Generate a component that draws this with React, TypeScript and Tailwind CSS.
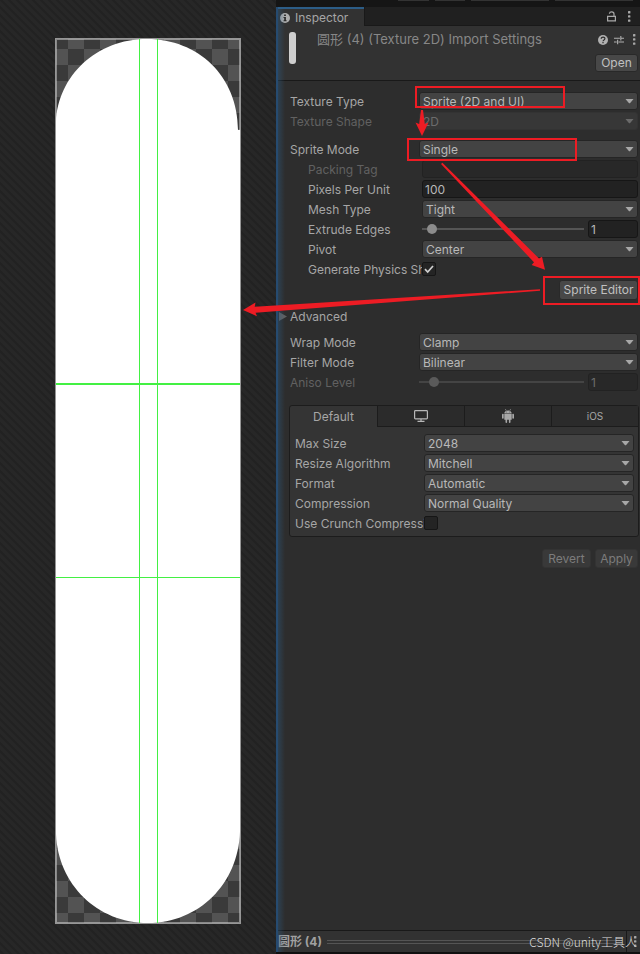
import React from 'react';

const SANS = "font-['Inter','Noto_Sans_CJK_SC',sans-serif]";

function Caret({ dim = false }: { dim?: boolean }) {
  return (
    <svg
      className={`pointer-events-none absolute top-[7px] right-1 h-[5px] w-[9px] ${dim ? 'text-[#6a6a6a]' : 'text-[#a8a8a8]'}`}
      viewBox="0 0 9 5"
      aria-hidden="true"
    >
      <path d="M.5 0h8L5.200 4a1 1 0 0 1-1.400 0z" fill="currentColor" />
    </svg>
  );
}

function Dropdown({ id, value, disabled = false }: { id: string; value: string; disabled?: boolean }) {
  return (
    <div className="relative h-[18px] min-w-0 flex-1">
      <select
        id={id}
        disabled={disabled}
        defaultValue={value}
        className={`block h-[18px] w-full appearance-none rounded-[3px] border px-[3px] text-[12px] leading-[15px] opacity-100 outline-none ${
          disabled ? 'border-[#333] bg-[#373737] text-[#6c6c6c]' : 'border-[#252525] bg-[#434343] text-[#b8b8b8]'
        }`}
      >
        <option>{value}</option>
      </select>
      <Caret dim={disabled} />
    </div>
  );
}

function TextBox({ id, value, disabled = false, narrow = false }: { id: string; value: string; disabled?: boolean; narrow?: boolean }) {
  return (
    <input
      id={id}
      type="text"
      defaultValue={value}
      disabled={disabled}
      aria-label={id}
      className={`h-[18px] min-w-0 rounded-[3px] border px-[2px] text-[12px] leading-[16px] outline-none ${
        narrow ? 'w-[50px]' : 'flex-1'
      } ${disabled ? 'border-[#222] bg-[#282828] text-[#6c6c6c]' : 'border-[#161616] bg-[#222] text-[#b8b8b8]'}`}
    />
  );
}

function Slider({ id, value, disabled = false }: { id: string; value: number; disabled?: boolean }) {
  return (
    <input
      id={id}
      type="range"
      min={0}
      max={32}
      defaultValue={value}
      disabled={disabled}
      className={`h-[18px] min-w-0 flex-1 appearance-none bg-transparent [&::-webkit-slider-runnable-track]:h-[2px] [&::-webkit-slider-thumb]:mt-[-4px] [&::-webkit-slider-thumb]:h-[10px] [&::-webkit-slider-thumb]:w-[10px] [&::-webkit-slider-thumb]:appearance-none [&::-webkit-slider-thumb]:rounded-full ${
        disabled
          ? '[&::-webkit-slider-runnable-track]:bg-[#444] [&::-webkit-slider-thumb]:bg-[#5a5a5a]'
          : '[&::-webkit-slider-runnable-track]:bg-[#555] [&::-webkit-slider-thumb]:bg-[#8c8c8c]'
      }`}
    />
  );
}

function Check({ id, checked = false }: { id: string; checked?: boolean }) {
  return (
    <span className="relative mt-[2px] block h-[14px] w-[14px]">
      <input
        id={id}
        type="checkbox"
        defaultChecked={checked}
        className="block h-[14px] w-[14px] appearance-none rounded-[2px] border border-[#161616] bg-[#242424]"
      />
      {checked && (
        <svg className="pointer-events-none absolute inset-0 h-[14px] w-[14px]" viewBox="0 0 14 14" aria-hidden="true">
          <path d="M3 7.2 5.7 10 11 4" fill="none" stroke="#cfcfcf" strokeWidth="1.7" />
        </svg>
      )}
    </span>
  );
}

function Row({
  id,
  label,
  indent = false,
  dim = false,
  children,
}: {
  id: string;
  label: string;
  indent?: boolean;
  dim?: boolean;
  children?: React.ReactNode;
}) {
  return (
    <div className="flex h-5">
      <label
        htmlFor={id}
        className={`shrink-0 overflow-hidden text-[12px] leading-[20px] whitespace-nowrap ${
          indent ? 'w-[132px] pl-[18px]' : 'w-[129px]'
        } ${dim ? 'text-[#616161]' : 'text-[#a6a6a6]'}`}
      >
        {label}
      </label>
      {children}
    </div>
  );
}

function Dots({ className = '' }: { className?: string }) {
  return (
    <svg className={`h-[11px] w-[3px] ${className}`} viewBox="0 0 3 11" fill="#a8a8a8" aria-hidden="true">
      <rect y="0" width="2.4" height="2.4" rx=".5" />
      <rect y="4.2" width="2.4" height="2.4" rx=".5" />
      <rect y="8.4" width="2.4" height="2.4" rx=".5" />
    </svg>
  );
}

function SpriteCanvas() {
  return (
    <section
      aria-label="Sprite canvas"
      className="min-w-0 flex-1 bg-[linear-gradient(45deg,#222_12%,#272727_20%_42%,#222_50%_62%,#272727_70%_92%,#222)] bg-[length:8px_8px] pt-[38px] pl-[55px]"
    >
      <svg className="block h-[886px] w-[186px]" viewBox="55 38 186 886" role="img" aria-label="Capsule sprite">
        <defs>
          <pattern id="checker" x="68" y="49" width="32" height="32" patternUnits="userSpaceOnUse">
            <rect width="32" height="32" fill="#3a3a3a" />
            <rect x="16" width="16" height="16" fill="#535353" />
            <rect y="16" width="16" height="16" fill="#535353" />
          </pattern>
        </defs>
        <rect x="55" y="38" width="186" height="886" fill="url(#checker)" shapeRendering="crispEdges" />
        <path
          d="M56 122C58 76 96 39 147 39C198 39 238 76 238 130H240V832C238 884 199 923 148 923C97 923 58 884 56 834Z"
          fill="#fff"
        />
        <rect x="56" y="39" width="184" height="884" fill="none" stroke="#fff" strokeOpacity=".4" strokeWidth="2" />
        <rect x="55.5" y="38.5" width="185" height="885" fill="none" stroke="#969696" />
        <g fill="#43f043" shapeRendering="crispEdges">
          <rect x="139" y="39" width="1" height="884" />
          <rect x="157" y="39" width="1" height="884" />
          <rect x="56" y="383" width="184" height="2" />
          <rect x="56" y="577" width="184" height="1" />
        </g>
      </svg>
    </section>
  );
}

function Annotations() {
  return (
    <svg className="pointer-events-none absolute top-0 right-0 h-[954px] w-[640px]" viewBox="0 0 640 954" aria-hidden="true">
      <g fill="none" stroke="#ed1c24" strokeWidth="2">
        <rect x="416" y="87" width="148" height="20" />
        <rect x="408" y="139" width="168" height="21" />
        <rect x="544" y="277" width="95" height="27" />
      </g>
      <g fill="#ed1c24">
        <path d="M421 110h2l1.8 14 3.7-1.5L422 136l-6.500-13.500 3.700 1.500z" />
        <path d="M441 164l1.400-1.200 96.600 95.700 3-1.700 3 13-13.300-4.700 2.300-2.800z" />
        <path d="M540 289.200v1.500L255.500 312.800l1.500 3.500L243 310l12.500-7.500-.8 4.300z" />
      </g>
    </svg>
  );
}

const BUTTON = 'rounded-[3px] border text-[12px] leading-[16px] whitespace-nowrap';

export default function App() {
  return (
    <div className={`relative flex min-h-screen overflow-hidden bg-[#282828] ${SANS}`}>
      <SpriteCanvas />

      <aside className="relative flex w-[364px] shrink-0 flex-col bg-[#2d2d2d]">
        <div className="flex h-[7px] gap-[6px] bg-[#151515] pl-[122px]">
          <span className="h-px w-[31px] bg-[#333]" />
          <span className="h-px w-[30px] bg-[#333]" />
          <span className="h-px w-[78px] bg-[#333]" />
          <span className="h-px w-[78px] bg-[#333]" />
        </div>

        <div className="flex h-[19px] bg-[#202020]">
          <button type="button" className="flex w-[88px] items-center border-t-2 border-[#2c5d87] bg-[#323232] pl-1 text-[12px] leading-[16px] text-[#a6a6a6]">
            <svg className="mr-[5px] h-[10px] w-[10px]" viewBox="0 0 10 10" aria-hidden="true">
              <circle cx="5" cy="5" r="5" fill="#adadad" />
              <path d="M4.100 1.500h1.800v1.600H4.100zM3.500 4h2.400v3.200h.7v1H3.500v-1h.7V5h-.7z" fill="#2b2b2b" />
            </svg>
            Inspector
          </button>
          <div className="flex flex-1 items-center justify-end gap-3 border-b border-l border-[#191919] pr-[9px]">
            <svg className="h-[11px] w-[9px]" viewBox="0 0 9 11" fill="none" stroke="#a8a8a8" strokeWidth="1.200" aria-hidden="true">
              <path d="M.6 5.300h7.800v4.600H.6zM7 5.300V3C7 .3 2.600.2 2.400 2.800" />
            </svg>
            <Dots />
          </div>
        </div>

        <header className="flex h-[55px] border-b border-[#191919] bg-[#323232]">
          <span className="mt-[6px] ml-[13px] block h-8 w-[7px] rounded-[3px] bg-[#cfcfcf]" />
          <h1 className="mt-[3px] ml-[21px] flex-1 text-[13px] leading-[20px] whitespace-nowrap text-[#878787]">
            圆形 (4) (Texture 2D) Import Settings
          </h1>
          <div className="mt-2 flex w-[44px] flex-col items-end">
            <div className="flex items-center gap-[6px] pr-1">
              <svg className="h-[10px] w-[10px]" viewBox="0 0 10 10" aria-hidden="true">
                <circle cx="5" cy="5" r="5" fill="#b0b0b0" />
                <path d="M3.200 3.800C3.200 1.500 7 1.500 6.900 3.800 6.800 5 5 4.900 5 6.300M5 7v1.300" fill="none" stroke="#2b2b2b" strokeWidth="1.200" />
              </svg>
              <svg className="h-[10px] w-[10px]" viewBox="0 0 11 10" fill="none" stroke="#b0b0b0" strokeWidth="1.200" aria-hidden="true">
                <path d="M0 3h6.500M7.500.5v5M7.500 3H11M0 7.200h3M4 4.800v5M5 7.200h6" />
              </svg>
              <Dots className="ml-[3px]" />
            </div>
            <button type="button" className={`${BUTTON} mt-[9px] mr-[2px] h-[18px] w-[43px] border-[#292929] bg-[#484848] text-[#c0c0c0]`}>
              Open
            </button>
          </div>
        </header>

        <main className="flex flex-col pr-[2px] pl-[14px]">
          <div className="mt-[11px]">
            <Row id="texture-type" label="Texture Type"><Dropdown id="texture-type" value="Sprite (2D and UI)" /></Row>
            <Row id="texture-shape" label="Texture Shape" dim><Dropdown id="texture-shape" value="2D" disabled /></Row>
          </div>
          <div className="mt-2">
            <Row id="sprite-mode" label="Sprite Mode"><Dropdown id="sprite-mode" value="Single" /></Row>
            <Row id="packing-tag" label="Packing Tag" indent dim><TextBox id="packing-tag" value="" disabled /></Row>
            <Row id="pixels-per-unit" label="Pixels Per Unit" indent><TextBox id="pixels-per-unit" value="100" /></Row>
            <Row id="mesh-type" label="Mesh Type" indent><Dropdown id="mesh-type" value="Tight" /></Row>
            <Row id="extrude-edges" label="Extrude Edges" indent>
              <div className="flex min-w-0 flex-1 gap-1">
                <Slider id="extrude-edges" value={1} />
                <TextBox id="extrude-value" value="1" narrow />
              </div>
            </Row>
            <Row id="pivot" label="Pivot" indent><Dropdown id="pivot" value="Center" /></Row>
            <Row id="physics-shape" label="Generate Physics Shape" indent><Check id="physics-shape" checked /></Row>
          </div>
          <button type="button" className={`${BUTTON} h-[20px] w-[79px] self-end border-[#292929] bg-[#484848] text-[#c0c0c0]`}>
            Sprite Editor
          </button>
          <button type="button" className="relative mt-[7px] self-start text-[12px] leading-[20px] text-[#a6a6a6]">
            <svg className="absolute top-[5px] left-[-11px] h-[9px] w-[8px]" viewBox="0 0 8 9" aria-hidden="true">
              <path d="M0 0l8 4.500L0 9z" fill="#606060" />
            </svg>
            Advanced
          </button>
          <div className="mt-[6px]">
            <Row id="wrap-mode" label="Wrap Mode"><Dropdown id="wrap-mode" value="Clamp" /></Row>
            <Row id="filter-mode" label="Filter Mode"><Dropdown id="filter-mode" value="Bilinear" /></Row>
            <Row id="aniso-level" label="Aniso Level" dim>
              <div className="flex min-w-0 flex-1 gap-1">
                <Slider id="aniso-level" value={2} disabled />
                <TextBox id="aniso-value" value="1" disabled narrow />
              </div>
            </Row>
          </div>

          <section className="mt-3 mr-[-1px] ml-[-1px] rounded-[3px] border border-[#1c1c1c] bg-[#343434] pb-[2px]">
            <div className="grid h-[21px] grid-cols-4 text-[#a6a6a6]">
              <button type="button" className="text-[12px] leading-[21px]">Default</button>
              <button type="button" aria-label="Desktop" className="flex items-center justify-center border-b border-l border-[#1c1c1c] bg-[#2b2b2b]">
                <svg className="h-3 w-[14px]" viewBox="0 0 14 12" fill="none" stroke="#b8b8b8" strokeWidth="1.200" aria-hidden="true">
                  <rect x=".6" y=".6" width="12.800" height="8.300" rx=".8" />
                  <path d="M7 9v2.300M3.500 11.400h7" />
                </svg>
              </button>
              <button type="button" aria-label="Android" className="flex items-center justify-center border-b border-l border-[#1c1c1c] bg-[#2b2b2b]">
                <svg className="h-[14px] w-3" viewBox="0 0 12 14" fill="#a8a8a8" aria-hidden="true">
                  <path d="M2.300 4.300C2.300.4 9.700.4 9.700 4.300zM2.300 4.800h7.400v6H8.500v2.500c0 .9-1.600.9-1.600 0v-2.500H5.100v2.500c0 .9-1.600.9-1.600 0v-2.500H2.300z" />
                  <rect y="4.700" width="1.700" height="5" rx=".8" />
                  <rect x="10.300" y="4.700" width="1.700" height="5" rx=".8" />
                  <path d="M3.300 0l1 1.800M8.700 0l-1 1.800" stroke="#a8a8a8" strokeWidth=".6" />
                  <circle cx="4.400" cy="2.900" r=".45" fill="#2b2b2b" />
                  <circle cx="7.600" cy="2.900" r=".45" fill="#2b2b2b" />
                </svg>
              </button>
              <button type="button" className="border-b border-l border-[#1c1c1c] bg-[#2b2b2b] text-[10px] leading-[20px]">iOS</button>
            </div>
            <div className="mt-[7px] pr-[4px] pl-[5px]">
              <Row id="max-size" label="Max Size"><Dropdown id="max-size" value="2048" /></Row>
              <Row id="resize-algorithm" label="Resize Algorithm"><Dropdown id="resize-algorithm" value="Mitchell" /></Row>
              <Row id="format" label="Format"><Dropdown id="format" value="Automatic" /></Row>
              <Row id="compression" label="Compression"><Dropdown id="compression" value="Normal Quality" /></Row>
              <Row id="crunch" label="Use Crunch Compression"><Check id="crunch" /></Row>
            </div>
          </section>

          <div className="mt-3 flex justify-end gap-1">
            <button type="button" disabled className={`${BUTTON} h-[19px] w-[49px] border-[#333] bg-[#393939] text-[#7c7c7c]`}>Revert</button>
            <button type="button" disabled className={`${BUTTON} h-[19px] w-[43px] border-[#333] bg-[#393939] text-[#7c7c7c]`}>Apply</button>
          </div>
        </main>

        <footer className="mt-auto flex h-[24px] items-center border-t border-b-2 border-t-[#191919] border-b-[#101010] bg-[#323232] pl-[2px]">
          <span className="text-[12px] leading-[20px] font-bold whitespace-nowrap text-[#a0a0a0]">圆形 (4)</span>
          <span className="ml-[5px] h-1 flex-1 border-y border-[#555]" />
          <span className="h-full w-[5px] border-r border-[#191919]" />
          <Dots className="mr-[3px] ml-[7px]" />
        </footer>

        <div className="pointer-events-none absolute top-[7px] bottom-[2px] left-0 w-[9px] border-l-2 border-[#264b70] bg-linear-to-r from-[#2c5d87]/40 to-transparent" />
        <p className="absolute right-[3px] bottom-[3px] font-['Noto_Sans_CJK_SC',sans-serif] text-[12px] leading-[18px] font-light whitespace-nowrap text-[#dedede]">
          CSDN @unity工具人
        </p>
      </aside>

      <Annotations />
    </div>
  );
}
